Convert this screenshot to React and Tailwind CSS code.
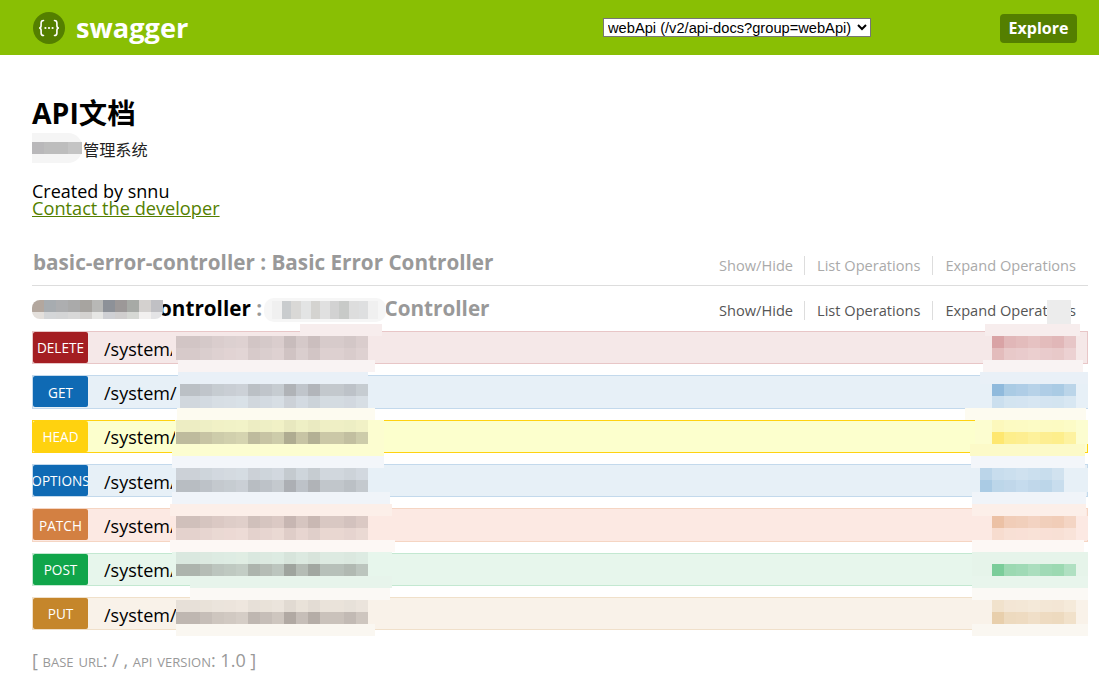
const SANS = "font-['Open_Sans','Noto_Sans_CJK_SC',sans-serif]";

const rows = [
  { m: "DELETE", row: "bg-[#f5e8e8] border-[#e8c6c7]", badge: "bg-[#a41e22]" },
  { m: "GET", row: "bg-[#e7f0f7] border-[#c3d9ec]", badge: "bg-[#0f6ab4]" },
  { m: "HEAD", row: "bg-[#fcffcd] border-[#ffd20f]", badge: "bg-[#ffd20f]" },
  { m: "OPTIONS", row: "bg-[#e7f0f7] border-[#c3d9ec]", badge: "bg-[#0f6ab4]" },
  { m: "PATCH", row: "bg-[#fce9e3] border-[#f5d5c3]", badge: "bg-[#d38042]" },
  { m: "POST", row: "bg-[#e7f6ec] border-[#c3e8d1]", badge: "bg-[#10a54a]" },
  { m: "PUT", row: "bg-[#f9f2e9] border-[#f0e0ca]", badge: "bg-[#c5862b]" },
];

function Logo() {
  return (
    <svg width="32" height="32" viewBox="0 0 32 32" className="shrink-0">
      <circle cx="16" cy="16" r="16" fill="#547f00" />
      <g fill="none" stroke="#fff" strokeWidth="1.6" strokeLinecap="round">
        <path d="M10.5 8.5c-2 0-2.4 1-2.4 2.6v2.4c0 1.4-.6 2.5-2 2.5 1.4 0 2 1.1 2 2.5v2.4c0 1.6.4 2.6 2.4 2.6" />
        <path d="M21.5 8.5c2 0 2.4 1 2.4 2.6v2.4c0 1.4.6 2.5 2 2.5-1.4 0-2 1.1-2 2.5v2.4c0 1.6-.4 2.6-2.4 2.6" />
      </g>
      <g fill="#fff">
        <circle cx="12.4" cy="16" r="1.1" />
        <circle cx="16" cy="16" r="1.1" />
        <circle cx="19.6" cy="16" r="1.1" />
      </g>
    </svg>
  );
}

function Links({ faded }) {
  const c = faded ? "text-[#aaa]" : "text-[#555]";
  return (
    <div className={`flex items-center text-[14.6px] leading-[19px] ${c}`}>
      <span className="pr-[11px] border-r border-[#ddd]">Show/Hide</span>
      <span className="px-[12px] border-r border-[#ddd]">List Operations</span>
      <span className="pl-[12px]">Expand Operations</span>
    </div>
  );
}

// ---- pixelated redaction patches lying over the content ----
const pL = [0.8, 0.8, 0.7, 0.6, 0.55, 0.5, 0.8, 0.7, 0.6, 1, 0.7, 0.95, 0.65, 0.65, 0.75, 0.6];
const pR = [1, 0.7, 0.65, 0.55, 0.65, 0.7, 0.5];

// left strength, right strength, right colour, right start
const M = {
  a1: [0.24, 0.34, "164,30,34", 992], a2: [0.2, 0.22, "164,30,34", 992],
  b1: [0.32, 0.4, "15,106,180", 992], b2: [0.16, 0.13, "15,106,180", 992],
  c1: [0.1, 0.1, "255,210,15", 992], c2: [0.4, 0.5, "255,210,15", 992],
  d1: [0.2, 0.2, "15,106,180", 980], d2: [0.34, 0.28, "15,106,180", 980],
  e1: [0.28, 0.38, "211,128,66", 992], e2: [0.15, 0.12, "211,128,66", 992],
  f1: [0.09, 0, "16,165,74", 992], f2: [0.42, 0.5, "16,165,74", 992],
  g1: [0.12, 0.15, "197,134,43", 992], g2: [0.38, 0.32, "197,134,43", 992],
};

// one 12px band per entry, from y = 324 down
const leftBands = [
  [300, 82, "#f7eded"], [172, 208, "#f5e8e8", "a1"], [172, 208, "#f5e8e8", "a2"],
  [178, 197, "#f9f3f3"], [178, 190, "#e9f0f7"], [180, 188, "#e7f0f7", "b1"], [180, 188, "#e7f0f7", "b2"],
  [177, 198, "#fdfbf0"], [175, 209, "#fcfdd0", "c1"], [175, 209, "#fcfdd0", "c2"],
  [172, 212, "#fcfdd0"], [172, 212, "#f3f6fa"], [172, 212, "#e7f0f7", "d1"], [172, 212, "#e7f0f7", "d2"],
  [172, 218, "#f0f4f9"], [170, 222, "#fcefe9"], [172, 220, "#fce9e3", "e1"], [172, 220, "#fce9e3", "e2"],
  [170, 225, "#fdf8f5"], [172, 220, "#e7f6ec", "f1"], [172, 220, "#e7f6ec", "f2"],
  [190, 202, "#e7f4eb"], [190, 200, "#fbf9f5"], [176, 200, "#f9f2e9", "g1"], [176, 200, "#f9f2e9", "g2"],
  [176, 199, "#faf7f1"],
];
const rightBands = [
  [985, 95, "#f7eded"], [985, 95, "#f5e8e8", "a1"], [985, 95, "#f5e8e8", "a2"],
  [983, 100, "#f9f3f3"], [980, 108, "#e9f0f7"], [982, 106, "#e7f0f7", "b1"], [982, 106, "#e7f0f7", "b2"],
  [965, 121, "#fdfbf0"], [975, 113, "#fcfdd0", "c1"], [975, 113, "#fcfdd0", "c2"],
  [970, 115, "#fcfac8"], [971, 114, "#f3f6fa"], [972, 116, "#e7f0f7", "d1"], [972, 116, "#e7f0f7", "d2"],
  [972, 114, "#f0f4f9"], [972, 114, "#fcefe9"], [972, 116, "#fce9e3", "e1"], [972, 116, "#fce9e3", "e2"],
  [972, 112, "#fdf8f5"], [972, 116, "#e6f4ea", "f1"], [972, 116, "#e6f4ea", "f2"],
  [972, 116, "#e8f5ec"], [972, 116, "#fbf9f5"], [972, 116, "#f9f2e9", "g1"], [972, 116, "#f9f2e9", "g2"],
  [972, 116, "#faf7f1"],
];

function BandColumn({ bands, side }) {
  return (
    <div className="flex flex-col w-[934px]">
      {bands.map(([x, w, bg, key], i) => {
        const spec = key ? M[key] : null;
        const start = side === "left" ? 176 : spec ? spec[3] : 0;
        const pattern = side === "left" ? pL : pR;
        return (
          <div
            key={i}
            className="h-[12px] flex overflow-hidden shrink-0"
            style={{ marginLeft: x - 165, width: w, backgroundColor: bg }}
          >
            {spec && (
              <div className="flex shrink-0" style={{ marginLeft: start - x }}>
                {pattern.map((p, k) => (
                  <div
                    key={k}
                    className="w-[12px] h-[12px] shrink-0"
                    style={{
                      backgroundColor:
                        side === "left"
                          ? `rgba(60,50,50,${p * spec[0]})`
                          : `rgba(${spec[2]},${p * spec[1]})`,
                    }}
                  />
                ))}
              </div>
            )}
          </div>
        );
      })}
    </div>
  );
}

const dark = ["#b3a79e", "#a7acb0", "#adaeb0", "#aaaaaa", "#a7a4a0", "#b8b8b6", "#8d9198", "#9c9898", "#a7aaa6", "#d4d1cf", "#c0c0c4"];
const low = ["#e4e0dc", "#d4d6d8", "#d4d5d6", "#d8d8d8", "#d4d2d0", "#e6e6e4", "#cfd0d4", "#d0cece", "#d6d8d4", "#f2f0ef", "#e4e4e6"];
const pale = ["#f0f0f0", "#c9ccce", "#d9d8d6", "#e3e4e4", "#d4d3d0", "#e0e0e0", "#d2d2d2", "#c8cac8", "#dddddd", "#dedfe0", "#f0f0f0"];

function Swatches({ colors, cls }) {
  return (
    <div className="flex">
      {colors.map((c, i) => (
        <div key={i} className={`flex-1 ${cls}`} style={{ backgroundColor: c }} />
      ))}
    </div>
  );
}

function Redactions() {
  return (
    <>
      {/* description */}
      <div className="absolute left-[32px] top-[133px] w-[50px] h-[30px] bg-[#f5f5f5] rounded-r-[14px] flex items-center">
        <div className="w-full h-[12px] flex">
          <div className="w-[12px] bg-[#b9b8ba]" />
          <div className="w-[24px] bg-[#bdbdbd]" />
          <div className="flex-1 bg-[#c4c4c4]" />
        </div>
      </div>
      {/* controller title */}
      <div className="absolute left-[32px] top-[300px] w-[131px] h-[19px] overflow-hidden rounded-b-[8px] rounded-tl-[8px]">
        <Swatches colors={dark} cls="h-[12px]" />
        <Swatches colors={low} cls="h-[7px]" />
      </div>
      <div className="absolute left-[264px] top-[298px] w-[122px] h-[24px] bg-[#f6f6f6] rounded-[10px] flex items-center px-[8px]">
        <div className="flex-1">
          <Swatches colors={pale} cls="h-[18px]" />
        </div>
      </div>
      <div className="absolute left-[1047px] top-[300px] w-[24px] h-[24px] bg-[#ececec]" />
      {/* operation rows */}
      <div className="absolute left-[165px] top-[324px]">
        <BandColumn bands={leftBands} side="left" />
      </div>
      <div className="absolute left-[165px] top-[324px]">
        <BandColumn bands={rightBands} side="right" />
      </div>
    </>
  );
}

export default function App() {
  return (
    <div className={`relative w-[1099px] h-[673px] overflow-hidden bg-white text-black ${SANS}`}>
      <header className="h-[55px] bg-[#89bf04] flex items-center pl-[33px] pr-[22px]">
        <Logo />
        <span className="ml-[11px] text-[27.2px] font-bold text-white leading-none w-[527px]">swagger</span>
        <select className="w-[268px] h-[19px] bg-white text-black text-[14.67px] font-['Liberation_Sans',sans-serif] border border-[#767676] appearance-auto">
          <option>webApi (/v2/api-docs?group=webApi)</option>
        </select>
        <button className="ml-auto mt-[2px] pb-[2px] w-[77px] h-[29px] rounded-[4px] bg-[#547f00] text-white text-[16px] font-bold leading-none">
          Explore
        </button>
      </header>

      <main className="pl-[32px] pr-[11px]">
        <h1 className="mt-[40px] text-[28.4px] leading-[36px] font-bold">API文档</h1>
        <p className="mt-[8px] text-[16.2px] leading-[22px] text-[#222]">
          <span className="inline-block w-[51px]" />
          管理系统
        </p>
        <div className="mt-[22px] text-[18px] leading-[17px]">Created by snnu</div>
        <a className="block text-[18.2px] leading-[17px] text-[#547f00] underline">Contact the developer</a>

        <section className="mt-[31px]">
          <div className="h-[38px] flex items-start justify-between border-b border-[#ddd] pr-[12px]">
            <h2 className="mt-[2px] text-[20.7px] leading-[25px] font-bold text-[#999] pl-[1px]">
              basic-error-controller : Basic Error Controller
            </h2>
            <div className="mt-[8px]">
              <Links faded />
            </div>
          </div>
          <div className="h-[45px] flex items-start justify-between pr-[12px]">
            <h2 className="mt-[10px] text-[20.7px] leading-[25px] font-bold text-[#999] whitespace-pre">
              <span className="text-black">
                <span className="inline-block w-[127px]" />
                ontroller
              </span>
              {" : "}
              <span className="inline-block w-[117px]" />
              Controller
            </h2>
            <div className="mt-[15px]">
              <Links />
            </div>
          </div>

          <ul className="flex flex-col gap-[11px]">
            {rows.map((r) => (
              <li key={r.m} className={`h-[33.33px] border flex items-center ${r.row}`}>
                <span
                  className={`w-[55px] h-[31px] pt-[2px] rounded-[2px] shrink-0 overflow-hidden flex items-center justify-center text-white text-[13.6px] whitespace-nowrap ${r.badge}`}
                >
                  {r.m}
                </span>
                <span className="ml-[16px] mt-[2px] text-[18px] leading-none">/system/</span>
              </li>
            ))}
          </ul>
        </section>

        <footer className="mt-[18px] text-[18px] leading-[24px] text-[#999] [font-variant:small-caps]">
          [ <span className="text-[18.8px]">base url</span>: / , <span className="text-[18.8px]">api version</span>: 1.0 ]
        </footer>
      </main>

      <Redactions />
    </div>
  );
}
